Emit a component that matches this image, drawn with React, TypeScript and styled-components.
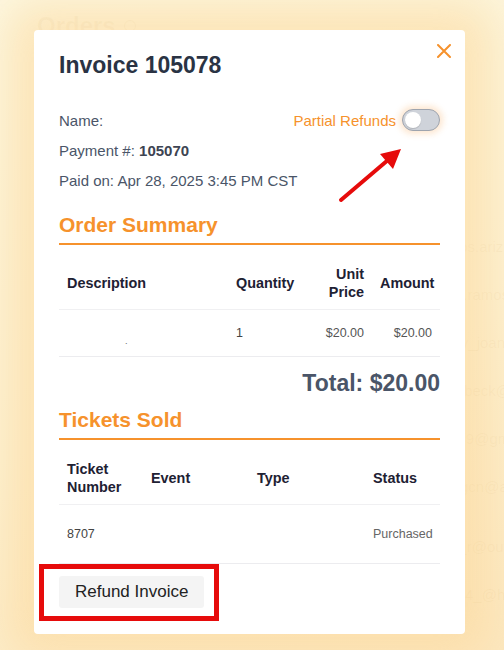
import React from "react";
import styled, { createGlobalStyle } from "styled-components";

const orange = "#f6922c";

const GlobalStyle = createGlobalStyle`
  html, body {
    margin: 0;
    padding: 0;
  }
  body {
    font-family: "Liberation Sans", Arial, sans-serif;
    background: #fdf6dc;
  }
`;

const Page = styled.div`
  position: relative;
  width: 504px;
  height: 650px;
  overflow: hidden;
  background: linear-gradient(160deg, #fdf9e4 0%, #fdf3d6 55%, #fce9c3 100%);
`;

const BackPage = styled.div`
  display: flex;
  flex-direction: column;
  padding: 12px 0 0 37px;
  color: rgba(190, 160, 100, 0.09);
`;

const BackTitle = styled.h1`
  margin: 0;
  font-size: 24px;
  line-height: 28px;
  font-weight: 700;
  display: flex;
  align-items: center;
  gap: 8px;
`;

const BackIcon = styled.span`
  width: 10px;
  height: 10px;
  border-radius: 50%;
  border: 1.5px solid currentColor;
`;

const EmailList = styled.ul`
  list-style: none;
  margin: 198px 0 0 398px;
  padding: 0;
  display: flex;
  flex-direction: column;
  gap: 30px;
  font-size: 15px;
  line-height: 18px;
  white-space: nowrap;
`;

const Email = styled.li<{ $gap?: number }>`
  margin-top: ${(p) => p.$gap ?? 0}px;
`;

const Modal = styled.div`
  position: absolute;
  left: 34px;
  top: 30px;
  width: 431px;
  box-sizing: border-box;
  padding: 21px 25px 26px 25px;
  background: #fff;
  border-radius: 4px;
  box-shadow: 0 0 50px 28px rgba(252, 214, 150, 0.55);
  display: flex;
  flex-direction: column;
`;

const CloseButton = styled.button`
  position: absolute;
  top: 10px;
  right: 10px;
  width: 22px;
  height: 22px;
  padding: 0;
  border: none;
  background: transparent;
  display: flex;
  align-items: center;
  justify-content: center;
  cursor: pointer;
`;

const Title = styled.h2`
  margin: 0;
  font-size: 23px;
  line-height: 28px;
  font-weight: 700;
  color: #2a3344;
`;

const Info = styled.div`
  margin-top: 26px;
  display: flex;
  flex-direction: column;
  font-size: 15px;
  color: #4a5568;
`;

const InfoRow = styled.div`
  height: 30px;
  display: flex;
  align-items: center;
  justify-content: space-between;
`;

const Strong = styled.b`
  color: #3d4452;
`;

const ToggleLabel = styled.label`
  display: flex;
  align-items: center;
  gap: 6px;
  color: ${orange};
  font-size: 15px;
`;

const Switch = styled.span<{ $on?: boolean }>`
  position: relative;
  width: 38px;
  height: 22px;
  box-sizing: border-box;
  border-radius: 11px;
  background: #cfd3da;
  border: 1.5px solid #9ea4ae;
  box-shadow: 0 0 6px 3px rgba(246, 146, 44, 0.22);
  display: flex;
  align-items: center;
  justify-content: ${(p) => (p.$on ? "flex-end" : "flex-start")};
  padding: 0 2px;
`;

const Knob = styled.span`
  width: 16px;
  height: 16px;
  border-radius: 50%;
  background: #fff;
  box-shadow: 0 1px 1px rgba(0, 0, 0, 0.15);
`;

const SectionTitle = styled.h3<{ $top: number }>`
  margin: ${(p) => p.$top}px 0 0 0;
  padding-bottom: 5px;
  border-bottom: 2px solid ${orange};
  color: ${orange};
  font-size: 21px;
  line-height: 26px;
  font-weight: 700;
`;

const Table = styled.table<{ $top: number }>`
  margin-top: ${(p) => p.$top}px;
  width: 100%;
  border-collapse: collapse;
  table-layout: fixed;
`;

const Th = styled.th<{ $w: number; $right?: boolean }>`
  box-sizing: border-box;
  width: ${(p) => p.$w}px;
  padding: 8px;
  text-align: ${(p) => (p.$right ? "right" : "left")};
  font-size: 14.4px;
  line-height: 18px;
  font-weight: 700;
  color: #1e2133;
  border-bottom: 1px solid #f0f0f2;
  vertical-align: middle;
`;

const Td = styled.td<{ $right?: boolean; $pad: number; $tone?: string }>`
  padding: ${(p) => p.$pad}px 8px;
  text-align: ${(p) => (p.$right ? "right" : "left")};
  font-size: 12.5px;
  line-height: 18px;
  color: ${(p) => p.$tone ?? "#555"};
  border-bottom: 1px solid #ececef;
  vertical-align: middle;
`;

const DescBlank = styled.div`
  height: 18px;
`;

const DescNote = styled.div`
  height: 12px;
  line-height: 10px;
  font-size: 9px;
  color: #666;
  padding-left: 58px;
`;

const Total = styled.div`
  margin-top: 12px;
  text-align: right;
  font-size: 23px;
  line-height: 28px;
  font-weight: 700;
  color: #4a5568;
`;

const Footer = styled.div`
  margin-top: 12px;
  display: flex;
`;

const RefundButton = styled.button`
  height: 32px;
  padding: 0 16px;
  border: none;
  border-radius: 3px;
  background: #f4f4f4;
  color: #222;
  font-family: "Liberation Sans", Arial, sans-serif;
  font-size: 17px;
  cursor: pointer;
`;

const Highlight = styled.div`
  position: absolute;
  left: 39px;
  top: 564px;
  width: 180px;
  height: 57px;
  box-sizing: border-box;
  border: 5px solid #e60b0b;
  pointer-events: none;
`;

const Arrow = styled.svg`
  position: absolute;
  left: 330px;
  top: 140px;
  pointer-events: none;
`;

const emails = [
  "carlos.arizu@yahoo.com",
  "jane.ramos@gmail.com",
  "mary_joanna@aol.com",
  "tom.beck@gmail.com",
  "lisa89@gmail.com",
  "pat.gcn@aol.com",
  "kim_r@outlook.com",
  "rob04_@hotmail.com",
];

export default function App() {
  return (
    <Page>
      <GlobalStyle />
      <BackPage>
        <BackTitle>
          Orders <BackIcon />
        </BackTitle>
        <EmailList>
          {emails.map((e, i) => (
            <Email key={e} $gap={i === 6 ? 12 : 0}>
              {e}
            </Email>
          ))}
        </EmailList>
      </BackPage>

      <Modal>
        <CloseButton aria-label="Close">
          <svg width="14" height="14" viewBox="0 0 14 14">
            <path d="M1 1 L13 13 M13 1 L1 13" stroke={orange} strokeWidth="2" strokeLinecap="round" />
          </svg>
        </CloseButton>
        <Title>Invoice 105078</Title>

        <Info>
          <InfoRow>
            <span>Name:</span>
            <ToggleLabel>
              Partial Refunds
              <Switch>
                <Knob />
              </Switch>
            </ToggleLabel>
          </InfoRow>
          <InfoRow>
            <span>
              Payment #: <Strong>105070</Strong>
            </span>
          </InfoRow>
          <InfoRow>
            <span>Paid on: Apr 28, 2025 3:45 PM CST</span>
          </InfoRow>
        </Info>

        <SectionTitle $top={17}>Order Summary</SectionTitle>
        <Table $top={12}>
          <thead>
            <tr>
              <Th $w={169}>Description</Th>
              <Th $w={75}>Quantity</Th>
              <Th $w={69} $right>
                Unit
                <br />
                Price
              </Th>
              <Th $w={68} $right>
                Amount
              </Th>
            </tr>
          </thead>
          <tbody>
            <tr>
              <Td $pad={8}>
                <DescBlank />
                <DescNote>.</DescNote>
              </Td>
              <Td $pad={8} $tone="#444">
                1
              </Td>
              <Td $pad={8} $right>
                $20.00
              </Td>
              <Td $pad={8} $right>
                $20.00
              </Td>
            </tr>
          </tbody>
        </Table>

        <Total>Total: $20.00</Total>

        <SectionTitle $top={10}>Tickets Sold</SectionTitle>
        <Table $top={12}>
          <thead>
            <tr>
              <Th $w={84}>
                Ticket
                <br />
                Number
              </Th>
              <Th $w={106}>Event</Th>
              <Th $w={116}>Type</Th>
              <Th $w={75}>Status</Th>
            </tr>
          </thead>
          <tbody>
            <tr>
              <Td $pad={20} $tone="#444">
                8707
              </Td>
              <Td $pad={20}></Td>
              <Td $pad={20}></Td>
              <Td $pad={20} $tone="#666">
                Purchased
              </Td>
            </tr>
          </tbody>
        </Table>

        <Footer>
          <RefundButton>Refund Invoice</RefundButton>
        </Footer>
      </Modal>

      <Highlight />
      <Arrow width="80" height="70" viewBox="0 0 80 70">
        <line x1="11" y1="60" x2="58" y2="20" stroke="#e60b0b" strokeWidth="4" strokeLinecap="round" />
        <polygon points="71,9 50,14 63,29" fill="#e60b0b" />
      </Arrow>
    </Page>
  );
}
